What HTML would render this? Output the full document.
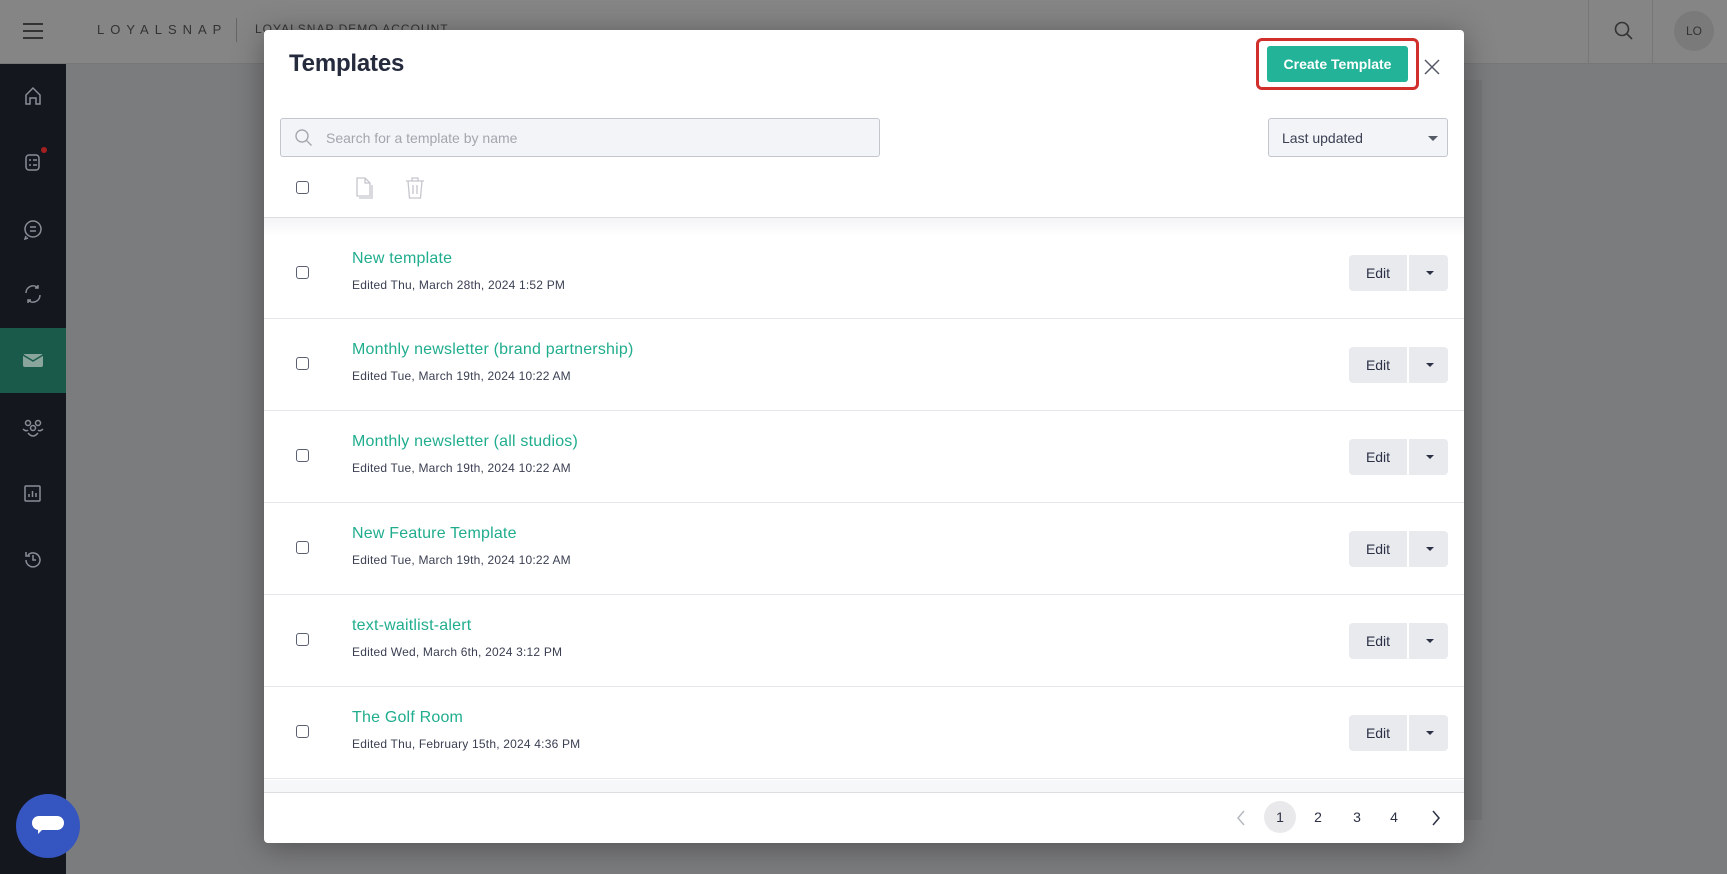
<!DOCTYPE html>
<html><head><meta charset="utf-8"><style>
*{margin:0;padding:0;box-sizing:border-box}
body{width:1727px;height:874px;overflow:hidden;position:relative;font-family:"Liberation Sans",sans-serif;background:#7b7c7e}
.abs{position:absolute}
.hdr{left:0;top:0;width:1727px;height:64px;background:#858585;border-bottom:1px solid #777}
.side{left:0;top:64px;width:66px;height:810px;background:#15171f}
.modal{left:264px;top:30px;width:1200px;height:813px;background:#fff;border-radius:4px;box-shadow:0 4px 30px rgba(0,0,0,.35);overflow:hidden}
.cb{position:absolute;width:13px;height:13px;border:1.6px solid #5a6072;border-radius:3px}
.row{position:absolute;left:0;width:1200px;border-bottom:1.5px solid #e6e7ea}
.t{position:absolute;left:88px;font-size:16px;color:#20ad8e;letter-spacing:.2px}
.d{position:absolute;left:88px;font-size:12px;color:#3a3f52;letter-spacing:.2px}
.eb{position:absolute;left:1085px;width:99px;height:36px;background:#e8eaee;border-radius:4px}
.eb span{position:absolute;left:0;width:58px;top:10px;text-align:center;font-size:14px;color:#2c3145}
.eb i{position:absolute;left:58px;top:0;width:1.5px;height:36px;background:#fff}
.eb b{position:absolute;left:77px;top:16px;border-left:4px solid transparent;border-right:4px solid transparent;border-top:4px solid #2c3145}
.pg{position:absolute;top:777px;font-size:14px;color:#2c3145;width:32px;height:32px;line-height:32px;text-align:center;border-radius:50%}
</style></head><body>
<div class="abs hdr">
  <div class="abs" style="left:23px;top:23px;width:20px;height:2px;background:#333;box-shadow:0 7px 0 #333,0 14px 0 #333"></div>
  <div class="abs" style="left:97px;top:22px;font-size:13px;letter-spacing:6px;color:#333">LOYALSNAP</div>
  <div class="abs" style="left:236px;top:18px;width:1px;height:24px;background:#666"></div>
  <div class="abs" style="left:255px;top:22px;font-size:12px;letter-spacing:1px;color:#333">LOYALSNAP DEMO ACCOUNT</div>
  <div class="abs" style="left:1588px;top:0;width:1px;height:64px;background:#777"></div>
  <div class="abs" style="left:1652px;top:0;width:1px;height:64px;background:#777"></div>
  <svg class="abs" style="left:1613px;top:20px" width="22" height="22" viewBox="0 0 22 22"><circle cx="9" cy="9" r="6.5" fill="none" stroke="#333" stroke-width="1.6"/><path d="M14 14l5 5" stroke="#333" stroke-width="1.6"/></svg>
  <div class="abs" style="left:1674px;top:11px;width:40px;height:40px;border-radius:50%;background:#7a7a7a;color:#333;font-size:12px;text-align:center;line-height:40px">LO</div>
</div>
<div class="abs side">
  <div class="abs" style="left:0;top:264px;width:66px;height:65px;background:#1a5a4b"></div>
  <svg class="abs" style="left:0;top:0" width="66" height="810" fill="none" stroke="#8a8d95" stroke-width="1.5">
    <path transform="translate(0,-7)" d="M26 38l7-7 7 7v9h-4v-6h-6v6h-4z"/>
    <rect x="26" y="91" width="13" height="15" rx="3"/><path d="M29 96h2M33 96h4M29 101h2M33 101h4"/>
    <circle cx="44" cy="86" r="3" fill="#a42020" stroke="none"/>
    <circle cx="33" cy="165" r="8"/><path d="M30 163h6M30 167h6M26 172l-1 3 3-1"/>
    <path d="M26 229a7 7 0 0 1 12-5M40 231a7 7 0 0 1-12 5M38 221v3h-3M28 239v-3h3"/>
    <rect x="23" y="290" width="20" height="13" rx="2" fill="#8aa69c" stroke="none"/><path d="M23 291l10 6 10-6" stroke="#1a5a4b"/>
    <g transform="translate(0,12)"><circle cx="28" cy="347" r="2.5"/><circle cx="38" cy="347" r="2.5"/><circle cx="33" cy="352" r="2.5"/><path d="M23 353q3 3 5 1M43 353q-3 3-5 1M28 357q5 6 10 0"/></g>
    <g transform="translate(0,17)"><rect x="25" y="405" width="15" height="15" rx="1"/><path d="M29 416v-3M32.5 416v-6M36 416v-4"/></g>
    <g transform="translate(0,23)"><path d="M26 473a7 7 0 1 0 2-5M26 465v4h4M33 468v5h3"/></g>
  </svg>
  <div class="abs" style="left:16px;top:730px;width:64px;height:64px;border-radius:50%;background:#3555c0"></div>
  <div class="abs" style="left:32px;top:752px;width:32px;height:14px;border-radius:7px;background:#fff"></div>
  <div class="abs" style="left:38px;top:765px;border-left:5px solid #fff;border-bottom:5px solid transparent"></div>
</div>
<div class="abs" style="left:1464px;top:80px;width:18px;height:740px;background:#747577"></div>
<div class="abs modal">
  <div class="abs" style="left:25px;top:20px;font-size:24px;color:#252a3d;font-weight:bold;letter-spacing:-.2px">Templates</div>
  <div class="abs" style="left:992px;top:8px;width:163px;height:52px;border:3px solid #d12f2c;border-radius:6px"></div>
  <div class="abs" style="left:1003px;top:16px;width:141px;height:36px;background:#22b398;border-radius:3px;color:#fff;font-size:14px;font-weight:bold;text-align:center;line-height:36px">Create Template</div>
  <svg class="abs" style="left:1158px;top:27px" width="20" height="20" stroke="#555a66" stroke-width="1.5"><path d="M3 3l14 14M17 3L3 17"/></svg>
  <div class="abs" style="left:16px;top:88px;width:600px;height:39px;border:1px solid #c3c6cd;border-radius:3px;background:#f3f4f8"></div>
  <svg class="abs" style="left:30px;top:98px" width="20" height="20" fill="none" stroke="#a5a8b0" stroke-width="1.4"><circle cx="8" cy="8" r="6"/><path d="M12.5 12.5l5 5"/></svg>
  <div class="abs" style="left:62px;top:100px;font-size:14px;color:#a3a6ae">Search for a template by name</div>
  <div class="abs" style="left:1004px;top:88px;width:180px;height:39px;border:1px solid #c3c6cd;border-radius:3px;background:#f3f4f8"></div>
  <div class="abs" style="left:1018px;top:100px;font-size:14px;color:#3a3f52">Last updated</div>
  <div class="abs" style="left:1164px;top:106px;border-left:5px solid transparent;border-right:5px solid transparent;border-top:5px solid #555a66"></div>
  <div class="cb" style="left:32px;top:151px"></div>
  <svg class="abs" style="left:90px;top:146px" width="22" height="26" fill="none" stroke="#c5c7cc" stroke-width="1.3"><path d="M3 2h8l5 5v13H3zM11 2v5h5M5 22h13V9"/></svg>
  <svg class="abs" style="left:140px;top:146px" width="22" height="24" fill="none" stroke="#c5c7cc" stroke-width="1.3"><path d="M2 5h18M8 5V2h6v3M4 5l1.5 17h11L18 5M9 9v9M13 9v9"/></svg>
  <div class="abs" style="left:0;top:187px;width:1200px;height:1px;background:#dcdde1"></div>
  <div class="abs" style="left:0;top:188px;width:1200px;height:18px;background:linear-gradient(#f3f4f6,#fff)"></div>

  <div class="row" style="top:188px;height:101px">
    <div class="cb" style="left:32px;top:48px"></div><div class="t" style="top:32px">New template</div><div class="d" style="top:60px">Edited Thu, March 28th, 2024 1:52 PM</div>
    <div class="eb" style="top:37px"><span>Edit</span><i></i><b></b></div></div>
  <div class="row" style="top:289px;height:92px">
    <div class="cb" style="left:32px;top:38px"></div><div class="t" style="top:22px">Monthly newsletter (brand partnership)</div><div class="d" style="top:50px">Edited Tue, March 19th, 2024 10:22 AM</div>
    <div class="eb" style="top:28px"><span>Edit</span><i></i><b></b></div></div>
  <div class="row" style="top:381px;height:92px">
    <div class="cb" style="left:32px;top:38px"></div><div class="t" style="top:22px">Monthly newsletter (all studios)</div><div class="d" style="top:50px">Edited Tue, March 19th, 2024 10:22 AM</div>
    <div class="eb" style="top:28px"><span>Edit</span><i></i><b></b></div></div>
  <div class="row" style="top:473px;height:92px">
    <div class="cb" style="left:32px;top:38px"></div><div class="t" style="top:22px">New Feature Template</div><div class="d" style="top:50px">Edited Tue, March 19th, 2024 10:22 AM</div>
    <div class="eb" style="top:28px"><span>Edit</span><i></i><b></b></div></div>
  <div class="row" style="top:565px;height:92px">
    <div class="cb" style="left:32px;top:38px"></div><div class="t" style="top:22px">text-waitlist-alert</div><div class="d" style="top:50px">Edited Wed, March 6th, 2024 3:12 PM</div>
    <div class="eb" style="top:28px"><span>Edit</span><i></i><b></b></div></div>
  <div class="row" style="top:657px;height:92px">
    <div class="cb" style="left:32px;top:38px"></div><div class="t" style="top:22px">The Golf Room</div><div class="d" style="top:50px">Edited Thu, February 15th, 2024 4:36 PM</div>
    <div class="eb" style="top:28px"><span>Edit</span><i></i><b></b></div></div>
  <div class="abs" style="left:0;top:750px;width:1200px;height:13px;background:#f6f7f9;border-bottom:1.5px solid #dcdde1"></div>
  <svg class="abs" style="left:970px;top:778px" width="14" height="20" fill="none" stroke="#b5b8be" stroke-width="1.5"><path d="M10 3l-6 7 6 7"/></svg>
  <div class="pg" style="left:1000px;top:771px;background:#e9e9eb">1</div>
  <div class="pg" style="left:1038px;top:771px">2</div>
  <div class="pg" style="left:1077px;top:771px">3</div>
  <div class="pg" style="left:1114px;top:771px">4</div>
  <div class="abs" style="left:1165px;top:778px"><svg width="14" height="20" fill="none" stroke="#2c3145" stroke-width="1.5"><path d="M4 3l6 7-6 7"/></svg></div>
</div>
</body></html>
